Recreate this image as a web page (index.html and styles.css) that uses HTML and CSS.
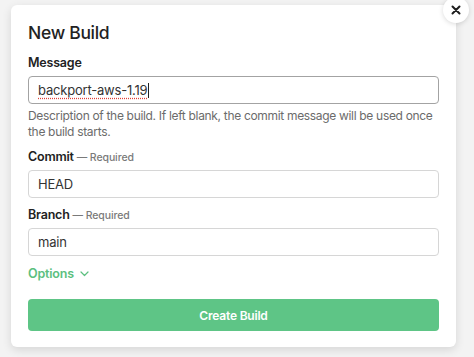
FILE: index.html
```html
<!DOCTYPE html>
<html lang="en">
<head>
  <meta charset="UTF-8" />
  <meta name="viewport" content="width=device-width, initial-scale=1.0"/>
  <title>New Build</title>
  <link rel="stylesheet" href="styles.css">
</head>
<body>

  <div class="backdrop">
    <div class="modal">
      <button class="close" aria-label="Close">
        <svg width="10" height="10" viewBox="0 0 10 10"><path d="M1.5 1.5 L8.5 8.5 M8.5 1.5 L1.5 8.5" stroke="#1f1f1f" stroke-width="2" stroke-linecap="round"/></svg>
      </button>

      <h2>New Build</h2>

      <div class="field">
        <label>Message</label>
        <div class="input focused"><span class="misspelt">backport-aws-1.19</span><span class="caret"></span></div>
        <p class="hint">Description of the build. If left blank, the commit message will be used once the build starts.</p>
      </div>

      <div class="field">
        <label>Commit <small>— Required</small></label>
        <div class="input">HEAD</div>
      </div>

      <div class="field">
        <label>Branch <small>— Required</small></label>
        <div class="input">main</div>
      </div>

      <a class="options" href="#">Options
        <svg width="9" height="6" viewBox="0 0 9 6"><path d="M1 1 L4.5 4.5 L8 1" fill="none" stroke="#5cbf7f" stroke-width="1.2" stroke-linecap="round" stroke-linejoin="round"/></svg>
      </a>

      <button class="submit">Create Build</button>
    </div>
  </div>

</body>
</html>
```

FILE: styles.css
```css
body {
  font-family: Inter, 'Noto Sans', sans-serif;
  background: #f3f3f3;
  margin: 0;
  color: #222;
}

.backdrop {
  padding: 5px 18px 10px 11px;
}

.modal {
  position: relative;
  width: 445px;
  box-sizing: border-box;
  background: #fff;
  border-radius: 6px;
  padding: 16px 17px 16px 17px;
  box-shadow: 0 3px 10px rgba(0,0,0,0.12);
}

.close {
  position: absolute;
  top: -8px;
  right: -13px;
  width: 26px;
  height: 26px;
  border: none;
  border-radius: 50%;
  background: #fff;
  box-shadow: 0 1px 5px rgba(0,0,0,0.15);
  display: flex;
  align-items: center;
  justify-content: center;
  padding: 0;
  cursor: pointer;
}

h2 {
  margin: 0 0 9px;
  font-size: 17.5px;
  line-height: 24px;
  font-weight: 500;
  letter-spacing: -0.3px;
  color: #222;
}

.field label {
  display: block;
  font-size: 12.5px;
  line-height: 18px;
  font-weight: 600;
  letter-spacing: -0.2px;
  color: #222;
  margin-bottom: 4px;
}

.field label small {
  font-size: 10.5px;
  font-weight: 500;
  letter-spacing: -0.1px;
  color: #7a7a7a;
}

.field + .field {
  margin-top: 8px;
}

.field + .field label {
  margin-bottom: 3px;
}

.input {
  height: 28px;
  box-sizing: border-box;
  border: 1px solid #d6d6d6;
  border-radius: 4px;
  padding: 0 9px;
  font-size: 13px;
  line-height: 26px;
  letter-spacing: -0.2px;
  color: #333;
  display: flex;
  align-items: center;
}

.input.focused {
  border-color: #a3a3a3;
}

.misspelt {
  text-decoration: underline dotted #e0413a;
  text-underline-offset: 3px;
}

.caret {
  display: inline-block;
  width: 1px;
  height: 15px;
  background: #222;
  margin-left: 1px;
}

.hint {
  margin: 4px 0 0;
  font-size: 12px;
  line-height: 16px;
  letter-spacing: -0.32px;
  color: #6b6b6b;
}

.options {
  display: flex;
  align-items: center;
  gap: 6px;
  margin-top: 9px;
  font-size: 12.5px;
  line-height: 18px;
  font-weight: 600;
  letter-spacing: -0.2px;
  color: #5cbf7f;
  text-decoration: none;
}

.submit {
  display: block;
  width: 100%;
  height: 32px;
  margin-top: 16px;
  border: none;
  border-radius: 4px;
  background: #5ec586;
  color: #fff;
  font-family: inherit;
  font-size: 12px;
  font-weight: 600;
  letter-spacing: -0.2px;
  cursor: pointer;
}
```
